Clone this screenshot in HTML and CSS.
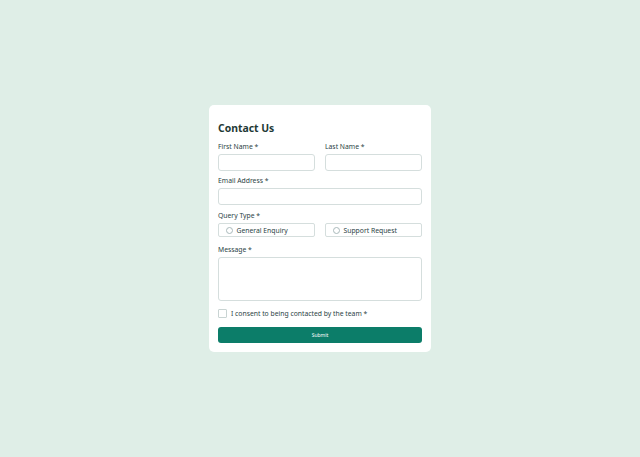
FILE: index.html
```html
<!DOCTYPE html>
<html lang="en">
<head>
<meta charset="utf-8">
<title>Contact Us</title>
<link rel="stylesheet" href="styles.css">
</head>
<body>
<main class="page">
  <form class="card">
    <h1 class="title">Contact Us</h1>
    <div class="row">
      <div class="field">
        <label class="label">First Name *</label>
        <div class="input"></div>
      </div>
      <div class="field">
        <label class="label">Last Name *</label>
        <div class="input"></div>
      </div>
    </div>
    <div class="field field-email">
      <label class="label">Email Address *</label>
      <div class="input"></div>
    </div>
    <div class="field field-query">
      <span class="label">Query Type *</span>
      <div class="row">
        <div class="radio"><span class="dot"></span>General Enquiry</div>
        <div class="radio"><span class="dot"></span>Support Request</div>
      </div>
    </div>
    <div class="field field-message">
      <label class="label">Message *</label>
      <div class="textarea"></div>
    </div>
    <div class="consent"><span class="box"></span>I consent to being contacted by the team *</div>
    <div class="submit">Submit</div>
  </form>
</main>
</body>
</html>
```
FILE: styles.css
```css
html, body {
  margin: 0;
  padding: 0;
}
body {
  background: #dfeee7;
  font-family: "Noto Sans", "Lato", sans-serif;
  color: #2a4244;
}
.page {
  height: 457px;
  display: flex;
  align-items: center;
  justify-content: center;
}
.card {
  width: 204px;
  padding: 16px 9px 9px;
  background: #ffffff;
  border-radius: 5px;
  display: flex;
  flex-direction: column;
}
.title {
  margin: 0 0 7px;
  font-size: 10.4px;
  line-height: 14px;
  font-weight: 700;
  color: #1f3a36;
}
.row {
  display: grid;
  grid-template-columns: 1fr 1fr;
  gap: 10px;
}
.field {
  display: flex;
  flex-direction: column;
}
.row .field {
  margin-bottom: 5px;
}
.field-email { margin-bottom: 6px; }
.field-query { margin-bottom: 8px; }
.label {
  font-size: 6.8px;
  line-height: 9px;
  margin-bottom: 3px;
}
.input {
  height: 15px;
  border: 1px solid #d5dedd;
  border-radius: 3px;
}
.radio {
  height: 12px;
  border: 1px solid #d5dedd;
  border-radius: 2px;
  display: flex;
  align-items: center;
  padding-left: 7px;
  font-size: 6.8px;
  gap: 3.5px;
}
.dot {
  width: 5px;
  height: 5px;
  border: 0.6px solid #a9b9ba;
  border-radius: 50%;
}
.textarea {
  height: 42px;
  border: 1px solid #d5dedd;
  border-radius: 3px;
}
.consent {
  display: flex;
  align-items: center;
  gap: 4px;
  font-size: 6.8px;
  margin-top: 8px;
  height: 9px;
}
.box {
  width: 7px;
  height: 7px;
  border: 1px solid #c9d4d3;
  border-radius: 1px;
}
.submit {
  margin-top: 9px;
  height: 16px;
  background: #0c7d69;
  border-radius: 3px;
  color: #ffffff;
  font-size: 5px;
  display: flex;
  align-items: center;
  justify-content: center;
}
```
